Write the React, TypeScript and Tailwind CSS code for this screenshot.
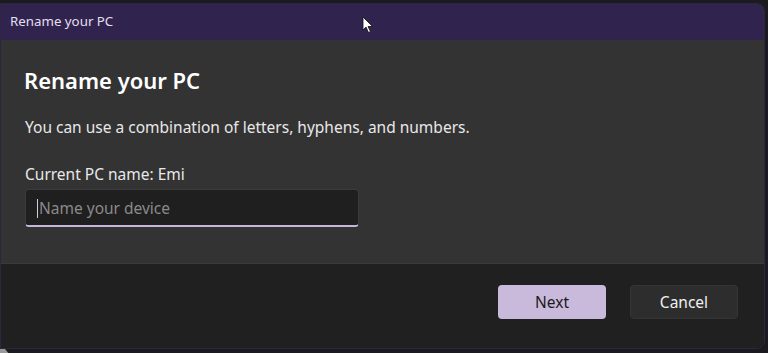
import React from "react";

export default function App() {
  const font = { fontFamily: '"Segoe UI", "Noto Sans", "Open Sans", sans-serif' };
  return (
    <div className="relative w-[768px] h-[353px] overflow-hidden bg-[#1b1a1f] pt-[3px]" style={font}>
      <div className="flex flex-col w-[765px] h-[346px] rounded-tr-[8px] rounded-br-[8px] border border-[#2c2640] overflow-hidden">
        <div className="h-[36px] shrink-0 bg-[#30244f] flex items-center px-[9px] text-[13.3px] text-[#e4dfee]">
          Rename your PC
        </div>
        <div className="h-[223px] shrink-0 bg-[#333333] px-[23px] pt-[25px] flex flex-col">
          <h1 className="text-[22px] leading-[30px] font-semibold text-white">Rename your PC</h1>
          <p className="mt-[22px] ml-px text-[15.5px] leading-[21px] text-[#e8e8e8]">
            You can use a combination of letters, hyphens, and numbers.
          </p>
          <p className="mt-[26px] ml-px text-[15.5px] leading-[21px] text-[#e8e8e8]">Current PC name: Emi</p>
          <div className="mt-[4px] ml-px w-[334px] h-[38px] rounded-[4px] bg-[#1f1f1f] border border-[#3b3b3b] border-b-2 border-b-[#c6b6d9] flex items-center px-[11px] pt-[2px] text-[15.5px] text-[#8a8a8a]">
            <span className="w-px h-[19px] bg-[#d0d0d0] mr-px"></span>
            Name your device
          </div>
        </div>
        <div className="flex-1 bg-[#202020] border-t border-[#3a3a3a] flex justify-end items-start pt-[21px] pr-[26px] gap-[24px]">
          <button className="w-[108px] h-[34px] rounded-[4px] bg-[#c9b9da] text-[#1c1a20] text-[15.5px] pt-[2px]">Next</button>
          <button className="w-[108px] h-[34px] rounded-[4px] bg-[#2d2d2d] border border-[#353535] text-[#f0f0f0] text-[15.5px] pt-[2px]">Cancel</button>
        </div>
      </div>
      <div className="absolute left-0 top-[349px] w-[10px] h-[6px] bg-[#9a9a9a] [clip-path:polygon(0_0,50%_0,100%_100%,0_100%)]"></div>
      <svg className="absolute left-[362px] top-[16px]" width="12" height="18" viewBox="0 0 12 18">
        <path d="M1 1 L1 14 L4 11 L6.5 16.5 L8.5 15.5 L6 10.5 L10.5 10.5 Z" fill="#ffffff" stroke="#111" strokeWidth="0.8" />
      </svg>
    </div>
  );
}
